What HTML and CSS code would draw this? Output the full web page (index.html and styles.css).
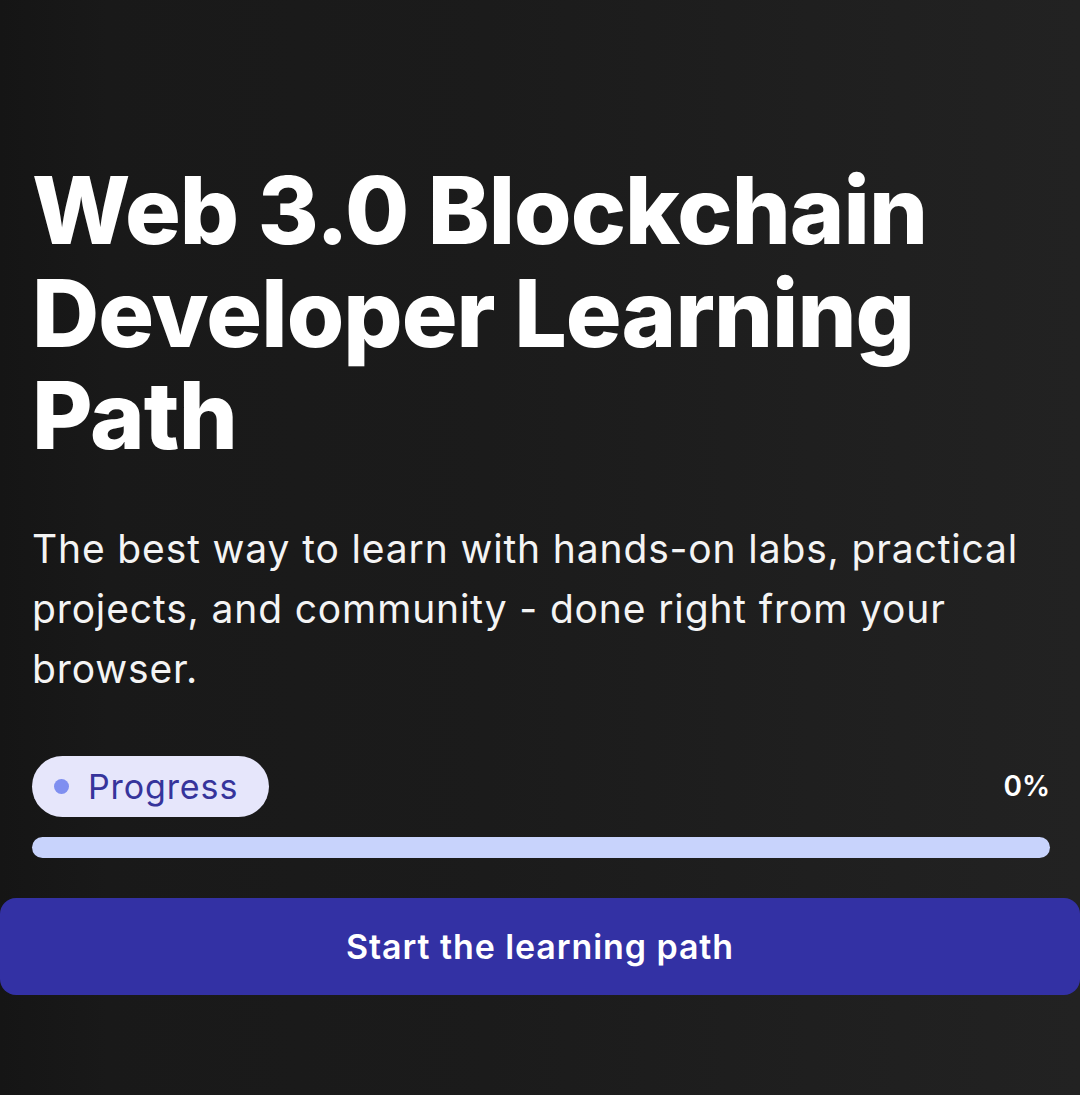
FILE: index.html
```html
<!DOCTYPE html>
<html lang="en">
<head>
<meta charset="utf-8">
<title>Web 3.0 Blockchain Developer Learning Path</title>
<link rel="stylesheet" href="styles.css">
</head>
<body>
<main class="hero">
  <div class="content">
    <h1 class="title">Web 3.0 Blockchain Developer Learning Path</h1>
    <p class="lead">The best way to learn with hands-on labs, practical projects, and community - done right from your browser.</p>
    <div class="progress-head">
      <span class="pill"><span class="dot"></span>Progress</span>
      <span class="percent">0%</span>
    </div>
    <div class="track"><div class="fill" style="width:0%"></div></div>
  </div>
  <button class="cta">Start the learning path</button>
</main>
</body>
</html>
```
FILE: styles.css
```css
html, body {
  margin: 0;
  padding: 0;
}
body {
  width: 1080px;
  height: 1095px;
  overflow: hidden;
  background: linear-gradient(90deg, #151515 0%, #191919 10%, #1b1b1b 45%, #1f1f1f 75%, #222222 100%);
  font-family: Inter, "Noto Sans", "Liberation Sans", sans-serif;
  color: #ffffff;
}
.hero {
  display: flex;
  flex-direction: column;
  padding-top: 159px;
}
.content {
  padding: 0 30px 0 32px;
  display: flex;
  flex-direction: column;
}
.title {
  margin: 0;
  font-size: 93px;
  line-height: 102.5px;
  font-weight: 800;
  letter-spacing: -0.01em;
}
.lead {
  margin: 52px 0 0 0;
  font-size: 39px;
  line-height: 60px;
  font-weight: 400;
  letter-spacing: 0.022em;
  color: #f4f4f4;
}
.progress-head {
  margin-top: 57px;
  display: flex;
  align-items: center;
  justify-content: space-between;
}
.pill {
  display: inline-flex;
  align-items: center;
  height: 61px;
  padding: 0 31px 0 22px;
  border-radius: 31px;
  background: #e6e6fb;
  color: #36349b;
  font-size: 34px;
  letter-spacing: 0.026em;
  gap: 19px;
}
.dot {
  width: 15px;
  height: 15px;
  border-radius: 50%;
  background: #7f8ff0;
}
.percent {
  font-size: 28px;
  font-weight: 600;
}
.track {
  margin-top: 20px;
  height: 21px;
  border-radius: 11px;
  background: #c8d3fc;
  overflow: hidden;
}
.fill {
  height: 100%;
  background: #3331a4;
}
.cta {
  margin-top: 40px;
  height: 97px;
  width: 1080px;
  border: none;
  border-radius: 16px;
  background: #3331a4;
  color: #ffffff;
  font-family: Inter, "Noto Sans", "Liberation Sans", sans-serif;
  font-size: 34px;
  font-weight: 600;
  letter-spacing: 0.027em;
  cursor: pointer;
}
```
